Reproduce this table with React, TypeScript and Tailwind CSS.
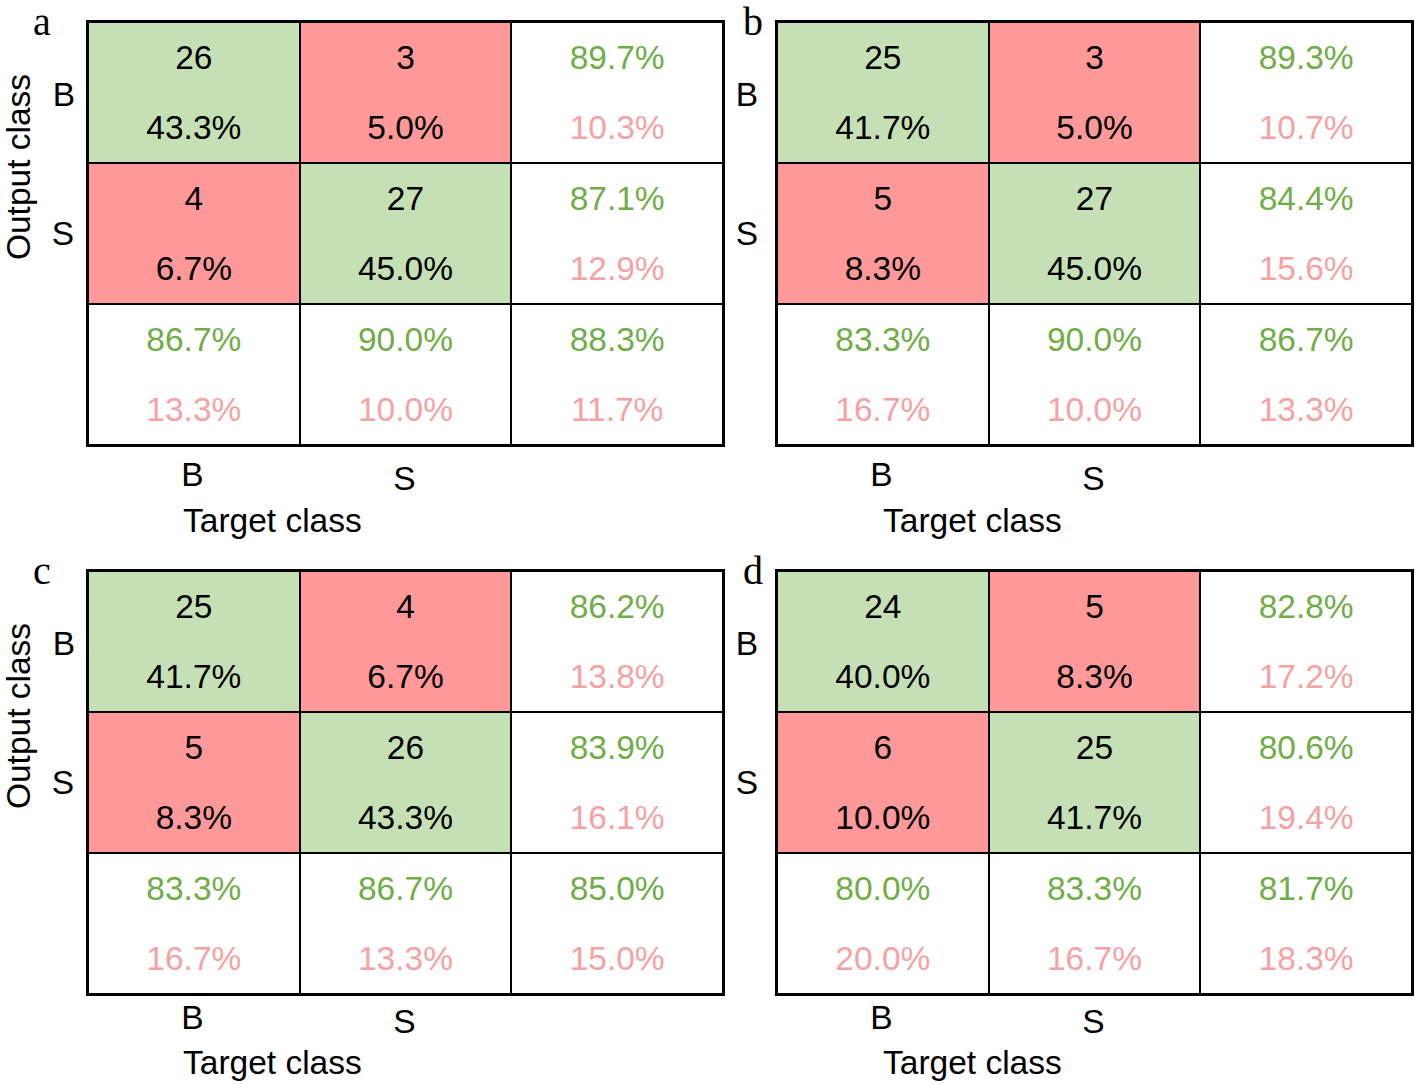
type Cell = { top: string; bottom: string; kind: "hit" | "miss" | "stat" };

type Matrix = {
  letter: string;
  rows: [string, string][][];
};

const panels: Matrix[] = [
  {
    letter: "a",
    rows: [
      [["26", "43.3%"], ["3", "5.0%"], ["89.7%", "10.3%"]],
      [["4", "6.7%"], ["27", "45.0%"], ["87.1%", "12.9%"]],
      [["86.7%", "13.3%"], ["90.0%", "10.0%"], ["88.3%", "11.7%"]],
    ],
  },
  {
    letter: "b",
    rows: [
      [["25", "41.7%"], ["3", "5.0%"], ["89.3%", "10.7%"]],
      [["5", "8.3%"], ["27", "45.0%"], ["84.4%", "15.6%"]],
      [["83.3%", "16.7%"], ["90.0%", "10.0%"], ["86.7%", "13.3%"]],
    ],
  },
  {
    letter: "c",
    rows: [
      [["25", "41.7%"], ["4", "6.7%"], ["86.2%", "13.8%"]],
      [["5", "8.3%"], ["26", "43.3%"], ["83.9%", "16.1%"]],
      [["83.3%", "16.7%"], ["86.7%", "13.3%"], ["85.0%", "15.0%"]],
    ],
  },
  {
    letter: "d",
    rows: [
      [["24", "40.0%"], ["5", "8.3%"], ["82.8%", "17.2%"]],
      [["6", "10.0%"], ["25", "41.7%"], ["80.6%", "19.4%"]],
      [["80.0%", "20.0%"], ["83.3%", "16.7%"], ["81.7%", "18.3%"]],
    ],
  },
];

function toCells(rows: [string, string][][]): Cell[] {
  const out: Cell[] = [];
  rows.forEach((row, r) =>
    row.forEach(([top, bottom], c) => {
      let kind: Cell["kind"] = "stat";
      if (r < 2 && c < 2) kind = r === c ? "hit" : "miss";
      out.push({ top, bottom, kind });
    })
  );
  return out;
}

function MatrixCell({ cell }: { cell: Cell }) {
  const bg =
    cell.kind === "hit"
      ? "bg-[#c5e0b4]"
      : cell.kind === "miss"
      ? "bg-[#ff9999]"
      : "bg-white";
  return (
    <div className={`${bg} flex flex-col items-center justify-center`}>
      <div
        className={`leading-[70px] ${
          cell.kind === "stat" ? "text-[#70ad47]" : "text-black"
        }`}
      >
        {cell.top}
      </div>
      <div
        className={`leading-[70px] ${
          cell.kind === "stat" ? "text-[#f6a2a2]" : "text-black"
        }`}
      >
        {cell.bottom}
      </div>
    </div>
  );
}

function Panel({
  data,
  left,
  bottomRow,
}: {
  data: Matrix;
  left: boolean;
  bottomRow: boolean;
}) {
  const cells = toCells(data.rows);
  return (
    <div
      className={`relative shrink-0 ${left ? "w-[725px]" : "w-[692px]"} ${
        bottomRow ? "h-[535px]" : "h-[549px]"
      }`}
    >
      <span
        className={`absolute top-[2px] ${
          left ? "left-[33px]" : "left-[18px]"
        } font-['Liberation_Serif',serif] text-[40px] leading-none`}
      >
        {data.letter}
      </span>
      {left && (
        <span className="absolute left-[19px] top-[167px] -translate-x-1/2 -translate-y-1/2 -rotate-90 whitespace-nowrap leading-none">
          Output class
        </span>
      )}

      <div className="flex pt-[20px]">
        <div
          className={`flex shrink-0 flex-col gap-[2px] pt-[3px] ${
            left ? "w-[86px]" : "w-[50px]"
          }`}
        >
          <div
            className={`flex h-[139px] items-center justify-end pt-[5px] leading-none ${
              left ? "pr-[11px]" : "pr-[17px]"
            }`}
          >
            B
          </div>
          <div
            className={`flex h-[139px] items-center justify-end leading-none ${
              left ? "pr-[12px]" : "pr-[17px]"
            }`}
          >
            S
          </div>
        </div>

        <div className="flex shrink-0 flex-col">
          <div className="grid h-[427px] w-[639px] grid-cols-3 grid-rows-3 gap-[2px] border-[3px] border-black bg-black">
            {cells.map((c, i) => (
              <MatrixCell key={i} cell={c} />
            ))}
          </div>
          <div className={`flex ${bottomRow ? "mt-[5px]" : "mt-[11px]"} leading-none`}>
            <div className="w-[213px] text-center">B</div>
            <div className="w-[211px] pt-[4px] text-center">S</div>
          </div>
          <div
            className={`${bottomRow ? "mt-[7px]" : "mt-[8px]"} ${
              left ? "pl-[97px]" : "pl-[108px]"
            } leading-none`}
          >
            Target class
          </div>
        </div>
      </div>
    </div>
  );
}

export default function App() {
  return (
    <div className="h-[1084px] w-[1417px] overflow-hidden bg-white font-['Liberation_Sans',Arial,sans-serif] text-[33.5px] text-black">
      <div className="flex">
        <Panel data={panels[0]} left bottomRow={false} />
        <Panel data={panels[1]} left={false} bottomRow={false} />
      </div>
      <div className="flex">
        <Panel data={panels[2]} left bottomRow />
        <Panel data={panels[3]} left={false} bottomRow />
      </div>
    </div>
  );
}
